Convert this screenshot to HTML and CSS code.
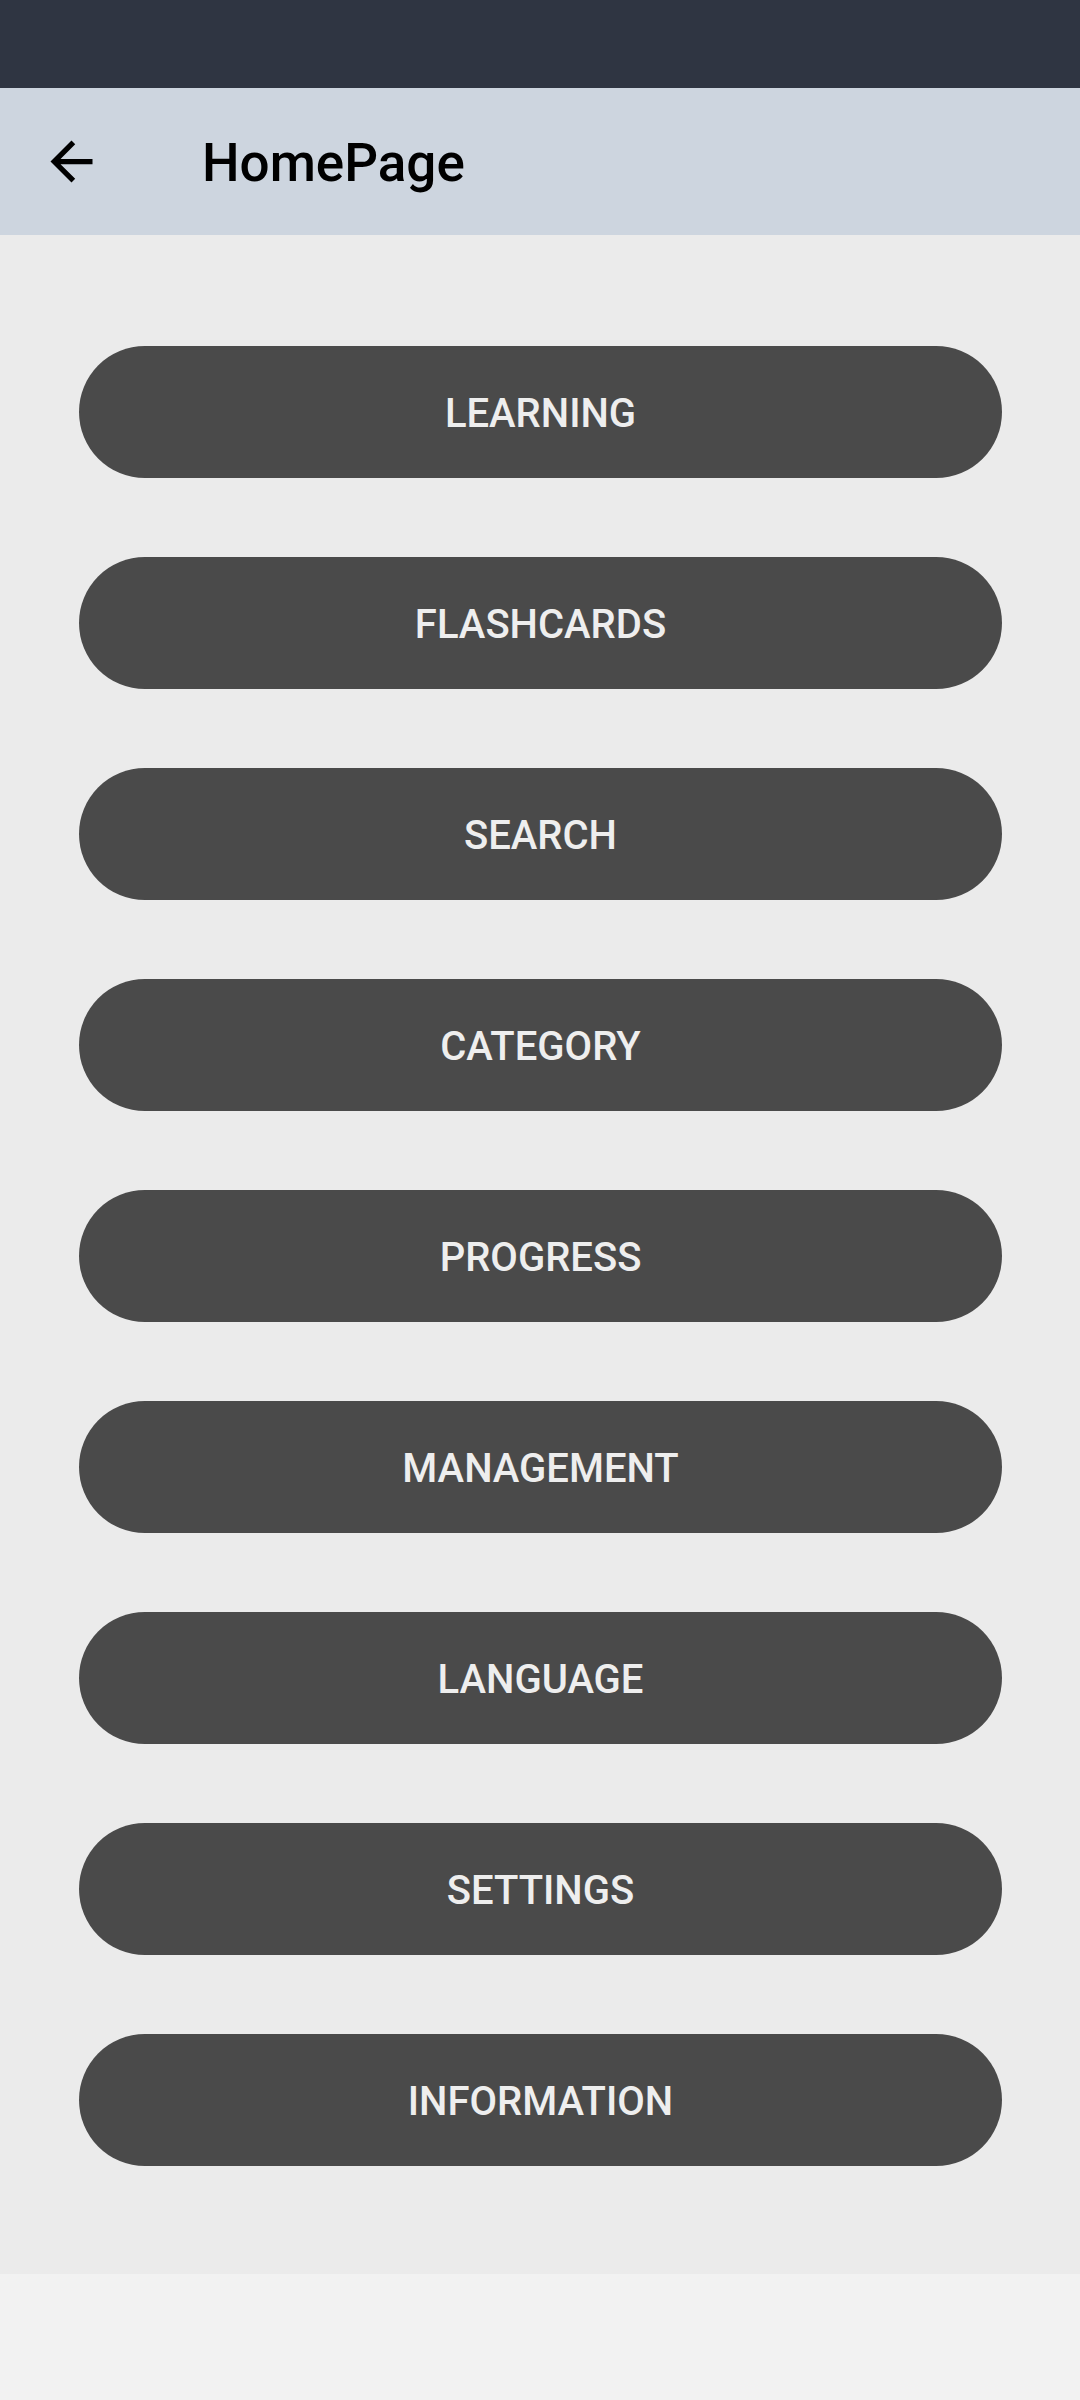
FILE: index.html
```html
<!DOCTYPE html>
<html>
<head>
<meta charset="utf-8">
<link rel="stylesheet" href="styles.css">
</head>
<body>
<div class="status-bar"></div>
<header class="app-bar">
  <div class="nav-btn">
    <svg class="nav-icon" viewBox="0 0 24 24"><path d="M20 11H7.83l5.59-5.59L12 4l-8 8 8 8 1.41-1.41L7.83 13H20v-2z"/></svg>
  </div>
  <h1 class="title">HomePage</h1>
</header>
<main class="menu">
  <button class="menu-btn">LEARNING</button>
  <button class="menu-btn">FLASHCARDS</button>
  <button class="menu-btn">SEARCH</button>
  <button class="menu-btn">CATEGORY</button>
  <button class="menu-btn">PROGRESS</button>
  <button class="menu-btn">MANAGEMENT</button>
  <button class="menu-btn">LANGUAGE</button>
  <button class="menu-btn">SETTINGS</button>
  <button class="menu-btn">INFORMATION</button>
</main>
<div class="bottom-fill"></div>
</body>
</html>
```

FILE: styles.css
```css
html, body {
  margin: 0;
  padding: 0;
  height: 100%;
}
body {
  display: flex;
  flex-direction: column;
  min-height: 2400px;
  background: #f2f2f2;
  font-family: Roboto, "Noto Sans", sans-serif;
}
.status-bar {
  height: 88px;
  background: #2f3542;
  flex: none;
}
.app-bar {
  height: 147px;
  background: #cdd5df;
  display: flex;
  align-items: center;
  flex: none;
}
.nav-btn {
  width: 63px;
  height: 63px;
  margin-left: 40px;
  display: flex;
  align-items: center;
  justify-content: center;
}
.nav-icon {
  width: 63px;
  height: 63px;
  fill: #000;
}
.title {
  margin: 4px 0 0 99px;
  font-size: 53px;
  font-weight: 500;
  color: #000;
  line-height: 1;
}
.menu {
  background: #ebebeb;
  padding: 111px 78px 108px 79px;
  display: flex;
  flex-direction: column;
  gap: 79px;
  flex: none;
}
.menu-btn {
  height: 132px;
  border: none;
  border-radius: 66px;
  background: #4a4a4a;
  color: #eeeeee;
  font-family: Roboto, "Noto Sans", sans-serif;
  font-size: 40px;
  font-weight: 500;
  letter-spacing: 0;
  padding: 3px 0 0 0;
}
.bottom-fill {
  flex: 1;
  background: #f2f2f2;
}
```
